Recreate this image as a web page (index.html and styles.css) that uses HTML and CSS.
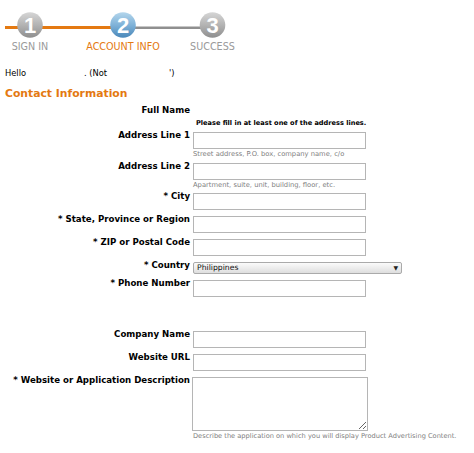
FILE: index.html
```html
<!DOCTYPE html>
<html>
<head>
<meta charset="utf-8">
<link rel="stylesheet" href="styles.css">
</head>
<body>
<div class="steps">
  <svg class="steps-graphic" width="250" height="41" viewBox="0 0 250 41">
    <defs>
      <linearGradient id="g-gray" x1="0" y1="0" x2="0" y2="1">
        <stop offset="0" stop-color="#d6d6d6"/>
        <stop offset="0.5" stop-color="#b3b3b3"/>
        <stop offset="1" stop-color="#8e8e8e"/>
      </linearGradient>
      <linearGradient id="g-blue" x1="0" y1="0" x2="0" y2="1">
        <stop offset="0" stop-color="#b4d6ec"/>
        <stop offset="0.5" stop-color="#7fb2d8"/>
        <stop offset="1" stop-color="#4a87b9"/>
      </linearGradient>
    </defs>
    <rect x="5" y="26" width="118" height="3" fill="#e47911"/>
    <rect x="123" y="26.5" width="90" height="2.5" fill="#8f8f8f"/>
    <circle cx="30" cy="25" r="12.8" fill="url(#g-gray)"/>
    <circle cx="123" cy="25" r="12.8" fill="url(#g-blue)"/>
    <circle cx="212.5" cy="25" r="12.8" fill="url(#g-gray)"/>
    <text x="30" y="33" class="num">1</text>
    <text x="123" y="33" class="num">2</text>
    <text x="212.5" y="33" class="num">3</text>
  </svg>
  <div class="step-labels">
    <span class="step-label">SIGN IN</span>
    <span class="step-label current">ACCOUNT INFO</span>
    <span class="step-label">SUCCESS</span>
  </div>
</div>

<p class="greet">Hello<span class="blank name1"></span>. (Not<span class="blank name2"></span>')</p>

<h2 class="section-title">Contact Information</h2>

<div class="form">
  <div class="row r-name">
    <div class="lbl">Full Name</div>
    <div class="fld"></div>
  </div>
  <div class="row r-note">
    <div class="lbl"></div>
    <div class="fld note">Please fill in at least one of the address lines.</div>
  </div>
  <div class="row r-addr1">
    <div class="lbl">Address Line 1</div>
    <div class="fld"><input class="txt" type="text"><div class="hint">Street address, P.O. box, company name, c/o</div></div>
  </div>
  <div class="row r-addr2">
    <div class="lbl">Address Line 2</div>
    <div class="fld"><input class="txt" type="text"><div class="hint">Apartment, suite, unit, building, floor, etc.</div></div>
  </div>
  <div class="row r-city">
    <div class="lbl">* City</div>
    <div class="fld"><input class="txt" type="text"></div>
  </div>
  <div class="row">
    <div class="lbl">* State, Province or Region</div>
    <div class="fld"><input class="txt" type="text"></div>
  </div>
  <div class="row">
    <div class="lbl">* ZIP or Postal Code</div>
    <div class="fld"><input class="txt" type="text"></div>
  </div>
  <div class="row">
    <div class="lbl">* Country</div>
    <div class="fld"><span class="sel"><select><option>Philippines</option></select></span></div>
  </div>
  <div class="row">
    <div class="lbl">* Phone Number</div>
    <div class="fld"><input class="txt" type="text"></div>
  </div>
  <div class="row r-company">
    <div class="lbl">Company Name</div>
    <div class="fld"><input class="txt" type="text"></div>
  </div>
  <div class="row">
    <div class="lbl">Website URL</div>
    <div class="fld"><input class="txt" type="text"></div>
  </div>
  <div class="row">
    <div class="lbl">* Website or Application Description</div>
    <div class="fld"><textarea class="area"></textarea><div class="hint">Describe the application on which you will display Product Advertising Content.</div></div>
  </div>
</div>
</body>
</html>
```
FILE: styles.css
```css
* { box-sizing: border-box; }

body {
  margin: 0;
  background: #fff;
  color: #000;
  font-family: "DejaVu Sans", Verdana, sans-serif;
}

.steps { width: 250px; }
.steps-graphic { display: block; }
.num {
  font-family: "Liberation Sans", Arial, sans-serif;
  font-weight: bold;
  font-size: 22px;
  fill: #fff;
  text-anchor: middle;
}

.step-labels {
  display: grid;
  grid-template-columns: 60px 126px 53px;
  font-size: 9.6px;
  line-height: 12px;
  color: #9a9a9a;
}
.step-label { text-align: center; white-space: nowrap; }
.step-label.current { color: #e47911; }

.greet {
  margin: 15px 0 0 5px;
  font-size: 8.3px;
  line-height: 11px;
  white-space: nowrap;
}
.blank { display: inline-block; }
.name1 { width: 58px; }
.name2 { width: 62px; }

.section-title {
  margin: 8px 0 0 5px;
  font-size: 10.8px;
  line-height: 13px;
  font-weight: bold;
  color: #e47911;
}

.form { margin-top: 5px; }

.row {
  display: flex;
  align-items: flex-start;
}
.row + .row { margin-top: 4px; }
.row.r-note, .row.r-addr1, .row.r-addr2 { margin-top: 2px; }
.row.r-city { margin-top: 1px; }
.row.r-company { margin-top: 32px; }

.lbl {
  flex: none;
  width: 190px;
  text-align: right;
  font-weight: bold;
  font-size: 8.65px;
  line-height: 11px;
  white-space: nowrap;
}

.fld {
  margin-left: 3px;
  padding-top: 2px;
}
.fld.note {
  padding: 0 0 0 3px;
  font-weight: bold;
  font-size: 6.6px;
  line-height: 10px;
  white-space: nowrap;
}

.txt {
  display: block;
  width: 173px;
  height: 17px;
  margin: 0;
  padding: 0 2px;
  border: 1px solid #b5b5b5;
  background: #fff;
  font: inherit;
}

.hint {
  font-size: 6.75px;
  line-height: 10px;
  color: #808080;
  white-space: nowrap;
}
.area + .hint { font-size: 6.65px; }

.sel {
  position: relative;
  display: block;
  width: 209px;
  height: 12px;
}
.sel select {
  appearance: none;
  -webkit-appearance: none;
  display: block;
  width: 100%;
  height: 12px;
  margin: 0;
  padding: 0 0 0 3px;
  border: 1px solid #aaa;
  border-radius: 2px;
  background: linear-gradient(#fbfbfb, #dedede);
  color: #111;
  font-family: "DejaVu Sans", Verdana, sans-serif;
  font-size: 7.7px;
  line-height: 10px;
}
.sel::after {
  content: "\25BC";
  position: absolute;
  right: 4px;
  top: 2px;
  font-size: 6px;
  line-height: 8px;
  color: #222;
  pointer-events: none;
}

.area {
  display: block;
  width: 176px;
  height: 54px;
  margin: 0 0 0 -1px;
  padding: 2px;
  border: 1px solid #b5b5b5;
  background: #fff;
  font: inherit;
}
```
